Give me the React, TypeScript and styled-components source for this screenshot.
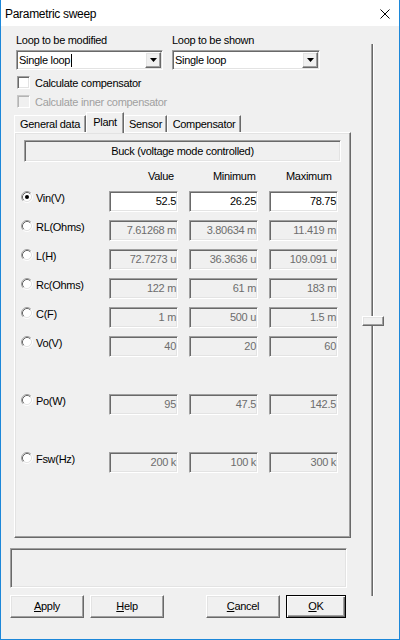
import styled, { createGlobalStyle, css } from "styled-components";

const GlobalStyle = createGlobalStyle`
  html, body {
    margin: 0;
    padding: 0;
    background: #f0f0f0;
  }
  body {
    font-family: "Liberation Sans", Arial, sans-serif;
  }
`;

const sunken = css`
  border: 1px solid;
  border-color: #a0a0a0 #ffffff #ffffff #a0a0a0;
  box-shadow: inset 1px 1px 0 #696969, inset -1px -1px 0 #e3e3e3;
`;

const raised = css`
  border: 1px solid;
  border-color: #ffffff #696969 #696969 #ffffff;
  box-shadow: inset -1px -1px 0 #a0a0a0, inset 1px 1px 0 #e3e3e3;
`;

const Window = styled.div`
  width: 400px;
  height: 640px;
  box-sizing: border-box;
  border: 1px solid #1c87d9;
  border-top: none;
  background: #f0f0f0;
  display: flex;
  flex-direction: column;
  font-size: 11px;
  letter-spacing: -0.3px;
  color: #000;
`;

const TitleBar = styled.div`
  height: 26px;
  flex: none;
  box-sizing: border-box;
  background: #fff;
  display: flex;
  justify-content: space-between;
  padding: 7px 9px 0 4px;
`;

const Title = styled.div`
  font-size: 12px;
  line-height: 14px;
`;

const CloseIcon = styled.svg`
  margin-top: 2px;
`;

const Body = styled.div`
  flex: 1;
  display: flex;
  padding-left: 9px;
`;

const Main = styled.div`
  width: 341px;
  display: flex;
  flex-direction: column;
`;

const TopArea = styled.div`
  padding: 8px 0 0 6px;
`;

const ComboRow = styled.div`
  display: flex;
  gap: 9px;
`;

const ComboGroup = styled.div`
  display: flex;
  flex-direction: column;
`;

const Caption = styled.div`
  line-height: 13px;
  height: 13px;
  margin-bottom: 3px;
`;

const Combo = styled.div<{ $w: number }>`
  width: ${(p) => p.$w}px;
  height: 20px;
  box-sizing: border-box;
  ${sunken};
  background: #fff;
  display: flex;
`;

const ComboText = styled.div`
  flex: 1;
  display: flex;
  align-items: center;
  padding-left: 2px;
  line-height: 13px;
`;

const Caret = styled.span`
  width: 1px;
  height: 13px;
  background: #000;
  margin-left: 1px;
`;

const DropButton = styled.div`
  width: 16px;
  margin: 1px;
  box-sizing: border-box;
  ${raised};
  background: #f0f0f0;
  display: flex;
  align-items: center;
  justify-content: center;
`;

const CheckRow = styled.label<{ $disabled?: boolean }>`
  display: flex;
  align-items: center;
  margin-top: 6px;
  height: 13px;
  color: ${(p) => (p.$disabled ? "#a0a0a0" : "#000")};
`;

const CheckBox = styled.span<{ $disabled?: boolean }>`
  width: 13px;
  height: 13px;
  box-sizing: border-box;
  margin-left: 1px;
  margin-right: 5px;
  ${sunken};
  background: ${(p) => (p.$disabled ? "#f0f0f0" : "#fff")};
  ${(p) =>
    p.$disabled &&
    css`
      border-color: #c8c8c8 #ffffff #ffffff #c8c8c8;
      box-shadow: inset 1px 1px 0 #b4b4b4;
    `}
`;

const TabStrip = styled.div`
  display: flex;
  align-items: flex-end;
  height: 20px;
  margin: 4px 0 0 4px;
`;

const Tab = styled.div<{ $w: number; $active?: boolean }>`
  width: ${(p) => p.$w}px;
  height: ${(p) => (p.$active ? 21 : 17)}px;
  margin-bottom: ${(p) => (p.$active ? -1 : 0)}px;
  box-sizing: border-box;
  border-top: 1px solid #fff;
  border-left: 1px solid #fff;
  border-right: 1px solid #696969;
  box-shadow: inset -1px 0 0 #a0a0a0;
  background: #f0f0f0;
  position: relative;
  z-index: ${(p) => (p.$active ? 1 : 0)};
  display: flex;
  justify-content: center;
  padding-top: ${(p) => (p.$active ? 3 : 2)}px;
  line-height: 13px;
`;

const Panel = styled.div`
  margin-left: 4px;
  width: 337px;
  height: 406px;
  box-sizing: border-box;
  ${raised};
  padding: 7px 0 0 6px;
  display: flex;
  flex-direction: column;
`;

const GroupBox = styled.div`
  margin-left: 3px;
  width: 317px;
  height: 22px;
  box-sizing: border-box;
  ${sunken};
  display: flex;
  align-items: center;
  justify-content: center;
`;

const HeaderRow = styled.div`
  display: flex;
  gap: 11px;
  margin-top: 8px;
  padding-left: 88px;
  line-height: 13px;
`;

const HeaderCell = styled.div<{ $inset: number }>`
  width: 69px;
  box-sizing: border-box;
  padding-left: ${(p) => p.$inset}px;
`;

const Rows = styled.div`
  display: flex;
  flex-direction: column;
  gap: 8px;
  margin-top: 8px;
`;

const ParamRow = styled.div<{ $spaced?: boolean }>`
  display: flex;
  align-items: flex-start;
  margin-top: ${(p) => (p.$spaced ? 29 : 0)}px;
`;

const RowLabel = styled.div`
  width: 73px;
  margin-left: 3px;
  line-height: 13px;
  padding-top: 1px;
`;

const Fields = styled.div`
  display: flex;
  gap: 11px;
`;

const Field = styled.div<{ $enabled?: boolean }>`
  width: 69px;
  height: 21px;
  box-sizing: border-box;
  ${sunken};
  background: ${(p) => (p.$enabled ? "#fff" : "#f0f0f0")};
  color: ${(p) => (p.$enabled ? "#000" : "#6d6d6d")};
  text-align: right;
  padding-right: 1px;
  line-height: 19px;
  white-space: nowrap;
`;

const StatusBox = styled.div`
  margin-top: 10px;
  width: 337px;
  height: 40px;
  box-sizing: border-box;
  ${sunken};
`;

const ButtonRow = styled.div`
  display: flex;
  margin-top: 7px;
`;

const Button = styled.div<{ $w: number; $gap: number; $default?: boolean }>`
  width: ${(p) => p.$w}px;
  margin-left: ${(p) => p.$gap}px;
  height: 23px;
  box-sizing: border-box;
  ${raised};
  ${(p) =>
    p.$default &&
    css`
      border-color: #000;
      box-shadow: inset 1px 1px 0 #fff, inset -1px -1px 0 #696969,
        inset -2px -2px 0 #a0a0a0;
    `}
  background: #f0f0f0;
  text-align: center;
  line-height: 21px;
`;

const SliderColumn = styled.div`
  margin-left: 11px;
  padding-top: 18px;
`;

const Track = styled.div`
  width: 22px;
  height: 552px;
  display: flex;
  flex-direction: column;
  background: linear-gradient(
    to right,
    transparent 9px,
    #a0a0a0 9px,
    #a0a0a0 10px,
    #696969 10px,
    #696969 11px,
    #ffffff 11px,
    #ffffff 12px,
    transparent 12px
  );
`;

const Thumb = styled.div`
  margin-top: 272px;
  width: 22px;
  height: 10px;
  box-sizing: border-box;
  ${raised};
  background: #f0f0f0;
`;

const Radio = ({ checked }: { checked?: boolean }) => (
  <svg width="12" height="12" viewBox="0 0 12 12">
    <circle cx="6" cy="6" r="4.5" fill="#fff" />
    <path d="M2.11 9.89A5.5 5.5 0 0 1 9.89 2.11" fill="none" stroke="#a0a0a0" />
    <path d="M9.89 2.11A5.5 5.5 0 0 1 2.11 9.89" fill="none" stroke="#ffffff" />
    <path d="M2.82 9.18A4.5 4.5 0 0 1 9.18 2.82" fill="none" stroke="#696969" />
    <path d="M9.18 2.82A4.5 4.5 0 0 1 2.82 9.18" fill="none" stroke="#e3e3e3" />
    {checked && <circle cx="6" cy="6" r="2" fill="#000" />}
  </svg>
);

const DropArrow = () => (
  <svg width="7" height="4" viewBox="0 0 7 4">
    <path d="M0 0H7L3.5 4Z" fill="#000" />
  </svg>
);

type Param = {
  name: string;
  values: [string, string, string];
  checked?: boolean;
  spaced?: boolean;
};

const params: Param[] = [
  { name: "Vin(V)", values: ["52.5", "26.25", "78.75"], checked: true },
  { name: "RL(Ohms)", values: ["7.61268 m", "3.80634 m", "11.419 m"] },
  { name: "L(H)", values: ["72.7273 u", "36.3636 u", "109.091 u"] },
  { name: "Rc(Ohms)", values: ["122 m", "61 m", "183 m"] },
  { name: "C(F)", values: ["1 m", "500 u", "1.5 m"] },
  { name: "Vo(V)", values: ["40", "20", "60"] },
  { name: "Po(W)", values: ["95", "47.5", "142.5"], spaced: true },
  { name: "Fsw(Hz)", values: ["200 k", "100 k", "300 k"], spaced: true },
];

export default function App() {
  return (
    <>
      <GlobalStyle />
      <Window>
        <TitleBar>
          <Title>Parametric sweep</Title>
          <CloseIcon width="10" height="10" viewBox="0 0 10 10">
            <path d="M0.5 0.5L9.5 9.5M9.5 0.5L0.5 9.5" stroke="#000" strokeWidth="1" />
          </CloseIcon>
        </TitleBar>
        <Body>
          <Main>
            <TopArea>
              <ComboRow>
                <ComboGroup>
                  <Caption>Loop to be modified</Caption>
                  <Combo $w={147}>
                    <ComboText>
                      Single loop
                      <Caret />
                    </ComboText>
                    <DropButton>
                      <DropArrow />
                    </DropButton>
                  </Combo>
                </ComboGroup>
                <ComboGroup>
                  <Caption>Loop to be shown</Caption>
                  <Combo $w={148}>
                    <ComboText>Single loop</ComboText>
                    <DropButton>
                      <DropArrow />
                    </DropButton>
                  </Combo>
                </ComboGroup>
              </ComboRow>
              <CheckRow>
                <CheckBox />
                Calculate compensator
              </CheckRow>
              <CheckRow $disabled>
                <CheckBox $disabled />
                Calculate inner compensator
              </CheckRow>
            </TopArea>

            <TabStrip>
              <Tab $w={72}>General data</Tab>
              <Tab $w={38} $active>
                Plant
              </Tab>
              <Tab $w={43}>Sensor</Tab>
              <Tab $w={74}>Compensator</Tab>
            </TabStrip>
            <Panel>
              <GroupBox>Buck (voltage mode controlled)</GroupBox>
              <HeaderRow>
                <HeaderCell $inset={39}>Value</HeaderCell>
                <HeaderCell $inset={24}>Minimum</HeaderCell>
                <HeaderCell $inset={17}>Maximum</HeaderCell>
              </HeaderRow>
              <Rows>
                {params.map((p) => (
                  <ParamRow key={p.name} $spaced={p.spaced}>
                    <Radio checked={p.checked} />
                    <RowLabel>{p.name}</RowLabel>
                    <Fields>
                      {p.values.map((v, i) => (
                        <Field key={i} $enabled={p.checked}>
                          {v}
                        </Field>
                      ))}
                    </Fields>
                  </ParamRow>
                ))}
              </Rows>
            </Panel>

            <StatusBox />

            <ButtonRow>
              <Button $w={74} $gap={0}>
                <u>A</u>pply
              </Button>
              <Button $w={74} $gap={6}>
                <u>H</u>elp
              </Button>
              <Button $w={74} $gap={42}>
                <u>C</u>ancel
              </Button>
              <Button $w={60} $gap={6} $default>
                <u>O</u>K
              </Button>
            </ButtonRow>
          </Main>
          <SliderColumn>
            <Track>
              <Thumb />
            </Track>
          </SliderColumn>
        </Body>
      </Window>
    </>
  );
}
